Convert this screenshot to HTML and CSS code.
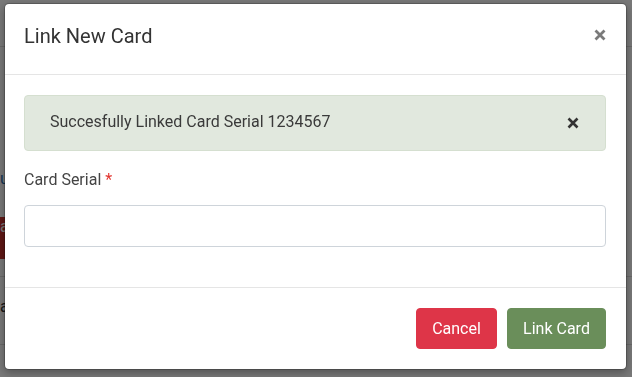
FILE: index.html
```html
<!DOCTYPE html>
<html>
<head>
<meta charset="utf-8">
<link rel="stylesheet" href="styles.css">
</head>
<body>
<div class="page">
  <div class="page-nav"></div>
  <div class="page-row page-link">u</div>
  <div class="page-btn">a</div>
  <div class="page-row page-line">a</div>
  <div class="page-row page-line"></div>
</div>
<div class="backdrop">
  <div class="modal">
    <div class="modal-header">
      <h5 class="modal-title">Link New Card</h5>
      <span class="close-x">
        <svg width="12" height="12" viewBox="0 0 12 12"><path d="M1.5 1.5 L10.5 10.5 M10.5 1.5 L1.5 10.5" stroke="#7a7a7a" stroke-width="2.8" fill="none"/></svg>
      </span>
    </div>
    <div class="modal-body">
      <div class="alert">
        <span>Succesfully Linked Card Serial 1234567</span>
        <span class="alert-x">
          <svg width="12" height="12" viewBox="0 0 12 12"><path d="M1.5 1.5 L10.5 10.5 M10.5 1.5 L1.5 10.5" stroke="#333" stroke-width="2.6" fill="none"/></svg>
        </span>
      </div>
      <label class="label">Card Serial <span class="req">*</span></label>
      <input class="input" type="text">
    </div>
    <div class="modal-footer">
      <button class="btn btn-cancel">Cancel</button>
      <button class="btn btn-link">Link Card</button>
    </div>
  </div>
</div>
</body>
</html>
```
FILE: styles.css
```css
html, body {
  margin: 0;
  padding: 0;
  width: 632px;
  height: 377px;
  overflow: hidden;
  font-family: Roboto, "Liberation Sans", sans-serif;
}
body {
  background: #fff;
}
.page {
  width: 632px;
}
.page-nav {
  height: 46px;
  border-bottom: 1px solid #ddd;
}
.page-row {
  font-size: 16px;
  color: #333;
}
.page-link {
  padding-top: 122px;
  color: #2a6fb0;
  height: 30px;
}
.page-btn {
  margin-top: 18px;
  height: 42px;
  width: 80px;
  background: #c9302c;
  color: #fff;
}
.page-line {
  border-top: 1px solid #ddd;
  margin-top: 17px;
  padding-top: 20px;
  height: 30px;
}
.backdrop {
  position: fixed;
  left: 0;
  top: 0;
  width: 632px;
  height: 377px;
  background: rgba(0, 0, 0, 0.53);
  padding: 3px 0 0 4px;
  box-sizing: border-box;
}
.modal {
  width: 623px;
  background: #fff;
  border: 1px solid rgba(0, 0, 0, 0.2);
  border-radius: 5px;
  box-sizing: border-box;
  background-clip: padding-box;
  box-shadow: 0 3px 9px rgba(0, 0, 0, 0.3);
}
.modal-header {
  display: flex;
  justify-content: space-between;
  align-items: flex-start;
  padding: 17px 20px 23px 19px;
  border-bottom: 1px solid #e5e5e5;
}
.modal-title {
  margin: 0;
  font-size: 20px;
  line-height: 30px;
  font-weight: 400;
  color: #333;
}
.close-x {
  display: flex;
  margin-top: 8px;
}
.modal-body {
  padding: 20px 20px 40px 19px;
}
.alert {
  display: flex;
  justify-content: space-between;
  align-items: center;
  background: #e1e8de;
  border: 1px solid #d5dfd0;
  border-radius: 4px;
  padding: 14px 26px 16px 25px;
  font-size: 16px;
  line-height: 24px;
  color: #3a3a3a;
  margin-bottom: 17px;
}
.alert-x {
  display: flex;
  margin-top: 1px;
}
.label {
  display: block;
  font-size: 16px;
  line-height: 24px;
  color: #444;
  margin-bottom: 13px;
}
.req {
  color: #e3342f;
}
.input {
  display: block;
  width: 100%;
  height: 42px;
  box-sizing: border-box;
  border: 1px solid #ced4da;
  border-radius: 4px;
  margin: 0;
  padding: 6px 12px;
  font-size: 16px;
  font-family: inherit;
}
.modal-footer {
  display: flex;
  justify-content: flex-end;
  gap: 10px;
  padding: 20px 20px 20px 19px;
  border-top: 1px solid #e5e5e5;
}
.btn {
  font-family: Roboto, "Liberation Sans", sans-serif;
  font-size: 16px;
  line-height: 23px;
  height: 41px;
  box-sizing: border-box;
  padding: 8px 15px;
  border: 1px solid transparent;
  border-radius: 4px;
  color: #fff;
  margin: 0;
}
.btn-cancel {
  width: 81px;
  background: #de3548;
  border-color: #de3548;
}
.btn-link {
  width: 99px;
  background: #6a8e5a;
  border-color: #6a8e5a;
}
```
